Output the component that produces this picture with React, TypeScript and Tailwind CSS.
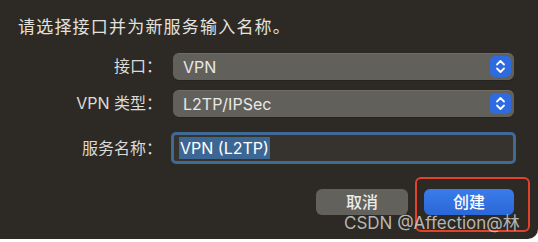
import React from 'react';

const font = { fontFamily: 'Inter, "Noto Sans CJK SC", sans-serif' };

const Stepper: React.FC = () => (
  <div className="flex h-[21px] w-[21px] items-center justify-center rounded-[5px] bg-[#2e6ae0]">
    <svg width="11" height="15" viewBox="0 0 11 15" fill="none" stroke="white" strokeWidth="1.8" strokeLinecap="round" strokeLinejoin="round">
      <path d="M2 5.5 L5.5 2 L9 5.5" />
      <path d="M2 9.5 L5.5 13 L9 9.5" />
    </svg>
  </div>
);

const Select: React.FC<{ value: string }> = ({ value }) => (
  <div className="flex h-[27px] flex-1 items-center justify-between rounded-[6px] border-t border-[#6f6d68] bg-[#62605b] pl-[10px] pr-[3px] shadow-[0_1px_0_#25231f]">
    <span className="text-[16px] text-[#e9e8e6]">{value}</span>
    <Stepper />
  </div>
);

const Row: React.FC<{ label: string; children: React.ReactNode; className?: string }> = ({ label, children, className }) => (
  <div className={`flex items-center ${className ?? ''}`}>
    <div className="w-[162px] shrink-0 text-right text-[16px] text-[#dcdbd8]">{label}</div>
    {children}
  </div>
);

export default function App() {
  return (
    <div className="h-[242px] w-[538px] bg-white" style={font}>
      <div className="relative h-[239px] w-[538px] overflow-hidden rounded-br-[10px] bg-[#2d2a25]">
        <div className="pl-[18px] pt-[15px] text-[17px] tracking-[1.2px] text-[#e2e1de]">请选择接口并为新服务输入名称。</div>

        <div className="mt-[12px] flex flex-col pr-[24px]">
          <Row label="接口：">
            <div className="ml-[11px] flex flex-1">
              <Select value="VPN" />
            </div>
          </Row>
          <Row label="VPN 类型：" className="mt-[10px]">
            <div className="ml-[11px] flex flex-1">
              <Select value="L2TP/IPSec" />
            </div>
          </Row>
          <Row label="服务名称：" className="mt-[15px]">
            <div className="ml-[9px] -mr-[2px] flex h-[32px] flex-1 items-center rounded-[5px] border-[3px] border-[#3e6a95] bg-[#36332e] pl-[5px]">
              <span className="bg-[#3c6794] px-[1px] text-[16px] leading-[22px] text-white">VPN (L2TP)</span>
            </div>
          </Row>
        </div>

        <div className="mt-[25px] flex justify-end gap-[16px] pr-[24px]">
          <button className="h-[26px] w-[92px] rounded-[6px] bg-[#63615c] text-[16px] font-medium text-[#ecebe9]">取消</button>
          <button className="h-[26px] w-[90px] rounded-[6px] bg-gradient-to-b from-[#3a7cea] to-[#2b67d6] text-[16px] font-medium text-white">创建</button>
        </div>

        <div className="absolute left-[415px] top-[177px] h-[55px] w-[115px] rounded-[6px] border-2 border-[#e4412b]" />
        <div className="absolute left-[344px] top-[211px] text-[17px] text-[#c9c8c4]/90">CSDN @Affection@林</div>
      </div>
    </div>
  );
}
